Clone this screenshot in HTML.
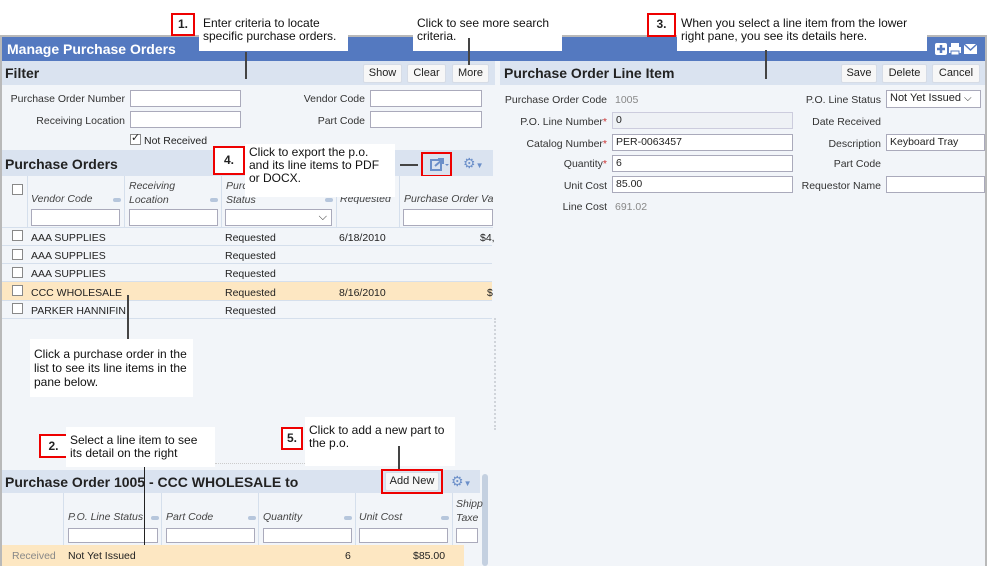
<!DOCTYPE html>
<html><head><meta charset="utf-8"><style>
*{box-sizing:border-box;margin:0;padding:0}
body{width:989px;height:566px;overflow:hidden;background:#fff;font-family:"Liberation Sans",sans-serif;font-size:10.5px;color:#222;position:relative}
.a{position:absolute}
.win{left:0;top:35px;width:987px;height:531px;background:#f2f5f9;border-left:2px solid #b9b9b9;border-top:2px solid #b9b9b9;border-right:2px solid #b9b9b9}
.title{left:2px;top:37px;width:983px;height:24px;background:#5479c0;color:#fff;font-weight:bold;font-size:14px;padding:4px 5px}
.hdr{background:#dae3f0;height:24px;font-weight:bold;font-size:14px;color:#222;padding:4px 3px}
.btn{background:#f7f7f7;border:1px solid #d6dce6;border-radius:2px;height:19px;font-size:11px;text-align:center;line-height:17px;color:#222}
.inp{background:#fff;border:1px solid #aab;height:17px;font-size:10.5px;padding:0 3px;line-height:15px}
.lbl{text-align:right;font-size:10.5px;color:#333}
.col{font-style:italic;color:#444;font-size:10.5px}
.row{left:2px;width:490px;height:18px;border-bottom:1px solid #d5dfec;font-size:10px;color:#222}
.cb{width:11px;height:11px;border:1px solid #888;background:#fff}
.sep{width:1px;background:#d5dfec}
.call{background:#fff;font-family:"Liberation Sans",sans-serif;font-size:12px;color:#111;line-height:13px;padding:2px 4px}
.num{border:2px solid #e00;background:#fff;font-family:"Liberation Sans",sans-serif;font-weight:bold;font-size:12px;text-align:center}
.ln{width:2px;background:#444}
.pill{width:8px;height:4px;border-radius:2px;background:#b6c6dc}
</style></head><body>
<div class="a win"></div>
<div class="a title">Manage Purchase Orders</div>
<div class="a" style="left:935px;top:42px;color:#fff;font-size:13px;font-weight:bold">
<svg width="44" height="14"><rect x="0" y="1" width="12" height="12" rx="2" fill="#fff"/><path d="M6 3v8M2 7h8" stroke="#5479c0" stroke-width="2.5"/><rect x="16" y="1" width="8" height="4" fill="#fff"/><rect x="14" y="5" width="12" height="6" fill="#fff"/><rect x="16" y="9" width="8" height="4" fill="#fff" stroke="#5479c0"/><rect x="29" y="2" width="13" height="10" fill="#fff"/><path d="M29 2l6.5 6 6.5-6" stroke="#5479c0" stroke-width="1.5" fill="none"/></svg></div>

<!-- Filter -->
<div class="a hdr" style="left:2px;top:61px;width:493px">Filter</div>
<div class="a btn" style="left:363px;top:64px;width:39px">Show</div>
<div class="a btn" style="left:407px;top:64px;width:39px">Clear</div>
<div class="a btn" style="left:452px;top:64px;width:37px">More</div>
<div class="a lbl" style="left:0;top:93px;width:125px">Purchase Order Number</div>
<div class="a inp" style="left:130px;top:90px;width:111px"></div>
<div class="a lbl" style="left:0;top:115px;width:125px">Receiving Location</div>
<div class="a inp" style="left:130px;top:111px;width:111px"></div>
<div class="a lbl" style="left:250px;top:93px;width:115px">Vendor Code</div>
<div class="a inp" style="left:370px;top:90px;width:112px"></div>
<div class="a lbl" style="left:250px;top:115px;width:115px">Part Code</div>
<div class="a inp" style="left:370px;top:111px;width:112px"></div>
<div class="a cb" style="left:130px;top:134px"></div><div class="a" style="left:131px;top:131px;font-size:11px">✓</div>
<div class="a" style="left:144px;top:135px">Not Received</div>

<!-- Purchase Orders -->
<div class="a hdr" style="left:2px;top:150px;width:491px;height:26px;padding-top:6px">Purchase Orders</div>
<div class="a" style="left:400px;top:164px;width:18px;height:2px;background:#444"></div>
<svg class="a" style="left:430px;top:156px" width="20" height="16"><rect x="1" y="4" width="10" height="10" fill="none" stroke="#6b8fc9" stroke-width="2"/><path d="M5 10l7-6M8 3h5v5" stroke="#6b8fc9" stroke-width="2" fill="none"/><path d="M15 8h4l-2 2z" fill="#6b8fc9"/></svg>
<div class="a" style="left:421px;top:152px;width:31px;height:25px;border:2px solid #e00"></div>
<div class="a" style="left:463px;top:155px;color:#6b8fc9;font-size:14px">⚙<span style="font-size:8px">▼</span></div>
<div class="a" style="left:2px;top:176px;width:491px;height:52px;background:#f2f5f9;border-bottom:1px solid #d5dfec"></div>
<div class="a cb" style="left:12px;top:184px"></div>
<div class="a sep" style="left:27px;top:176px;height:52px"></div>
<div class="a sep" style="left:124px;top:176px;height:52px"></div>
<div class="a sep" style="left:221px;top:176px;height:52px"></div>
<div class="a sep" style="left:336px;top:176px;height:52px"></div>
<div class="a sep" style="left:399px;top:176px;height:52px"></div>
<div class="a col" style="left:31px;top:193px">Vendor Code</div><div class="a pill" style="left:113px;top:198px"></div>
<div class="a col" style="left:129px;top:179px;line-height:14px">Receiving<br>Location</div><div class="a pill" style="left:210px;top:198px"></div>
<div class="a col" style="left:226px;top:179px;line-height:14px">Purc<br>Status</div><div class="a pill" style="left:325px;top:198px"></div>
<div class="a col" style="left:340px;top:193px">Requested</div>
<div class="a col" style="left:404px;top:193px;width:89px;overflow:hidden;white-space:nowrap">Purchase Order Value</div>
<div class="a inp" style="left:31px;top:209px;width:89px"></div>
<div class="a inp" style="left:129px;top:209px;width:89px"></div>
<div class="a inp" style="left:225px;top:209px;width:107px"><span style="position:absolute;right:4px;top:0;font-size:11px">⌵</span></div>
<div class="a inp" style="left:403px;top:209px;width:90px"></div>

<div class="a row" style="top:228px"></div><div class="a cb" style="left:12px;top:230px"></div><div class="a" style="left:31px;top:232px">AAA SUPPLIES</div><div class="a" style="left:225px;top:232px">Requested</div><div class="a" style="left:339px;top:232px">6/18/2010</div><div class="a" style="left:480px;top:232px">$4,</div>
<div class="a row" style="top:246px"></div><div class="a cb" style="left:12px;top:249px"></div><div class="a" style="left:31px;top:250px">AAA SUPPLIES</div><div class="a" style="left:225px;top:250px">Requested</div>
<div class="a row" style="top:264px"></div><div class="a cb" style="left:12px;top:267px"></div><div class="a" style="left:31px;top:268px">AAA SUPPLIES</div><div class="a" style="left:225px;top:268px">Requested</div>
<div class="a row" style="top:282px;height:19px;background:#fde7c2"></div><div class="a cb" style="left:12px;top:285px"></div><div class="a" style="left:31px;top:287px">CCC WHOLESALE</div><div class="a" style="left:225px;top:287px">Requested</div><div class="a" style="left:339px;top:287px">8/16/2010</div><div class="a" style="left:487px;top:287px">$</div>
<div class="a row" style="top:301px"></div><div class="a cb" style="left:12px;top:303px"></div><div class="a" style="left:31px;top:305px">PARKER HANNIFIN</div><div class="a" style="left:225px;top:305px">Requested</div>
<div class="a" style="left:494px;top:318px;height:112px;border-left:2px dotted #d0d4da"></div>

<!-- bottom pane -->
<div class="a" style="left:215px;top:463px;width:110px;border-top:1px dotted #ccc"></div>
<div class="a hdr" style="left:2px;top:470px;width:478px;height:23px;padding-top:4px">Purchase Order 1005 - CCC WHOLESALE to</div>
<div class="a btn" style="left:385px;top:472px;width:54px">Add New</div>
<div class="a" style="left:381px;top:469px;width:62px;height:25px;border:2px solid #e00"></div>
<div class="a" style="left:451px;top:473px;color:#6b8fc9;font-size:14px">⚙<span style="font-size:8px">▼</span></div>
<div class="a" style="left:482px;top:474px;width:6px;height:92px;background:#c4d0e0;border-radius:3px"></div>
<div class="a sep" style="left:63px;top:493px;height:52px"></div>
<div class="a sep" style="left:161px;top:493px;height:52px"></div>
<div class="a sep" style="left:258px;top:493px;height:52px"></div>
<div class="a sep" style="left:355px;top:493px;height:52px"></div>
<div class="a sep" style="left:452px;top:493px;height:52px"></div>
<div class="a col" style="left:68px;top:511px">P.O. Line Status</div><div class="a pill" style="left:151px;top:516px"></div>
<div class="a col" style="left:166px;top:511px">Part Code</div><div class="a pill" style="left:248px;top:516px"></div>
<div class="a col" style="left:263px;top:511px">Quantity</div><div class="a pill" style="left:344px;top:516px"></div>
<div class="a col" style="left:359px;top:511px">Unit Cost</div><div class="a pill" style="left:441px;top:516px"></div>
<div class="a col" style="left:456px;top:497px;line-height:14px">Shipp<br>Taxe</div>
<div class="a inp" style="left:68px;top:528px;width:90px;height:15px"></div>
<div class="a inp" style="left:166px;top:528px;width:89px;height:15px"></div>
<div class="a inp" style="left:263px;top:528px;width:89px;height:15px"></div>
<div class="a inp" style="left:359px;top:528px;width:89px;height:15px"></div>
<div class="a inp" style="left:456px;top:528px;width:22px;height:15px"></div>
<div class="a" style="left:2px;top:545px;width:462px;height:21px;background:#fde7c2"></div>
<div class="a" style="left:12px;top:550px;color:#888">Received</div>
<div class="a" style="left:68px;top:550px">Not Yet Issued</div>
<div class="a" style="left:345px;top:550px">6</div>
<div class="a" style="left:413px;top:550px">$85.00</div>

<!-- right pane -->
<div class="a hdr" style="left:500px;top:61px;width:485px;padding-left:4px">Purchase Order Line Item</div>
<div class="a btn" style="left:841px;top:64px;width:36px">Save</div>
<div class="a btn" style="left:882px;top:64px;width:45px">Delete</div>
<div class="a btn" style="left:932px;top:64px;width:48px">Cancel</div>
<div class="a lbl" style="left:500px;top:94px;width:107px">Purchase Order Code</div><div class="a" style="left:615px;top:94px;color:#888">1005</div>
<div class="a lbl" style="left:500px;top:116px;width:107px">P.O. Line Number<span style="color:#c33">*</span></div><div class="a inp" style="left:612px;top:112px;width:181px;background:#eef1f5;border-color:#ccd">0</div>
<div class="a lbl" style="left:500px;top:138px;width:107px">Catalog Number<span style="color:#c33">*</span></div><div class="a inp" style="left:612px;top:134px;width:181px">PER-0063457</div>
<div class="a lbl" style="left:500px;top:158px;width:107px">Quantity<span style="color:#c33">*</span></div><div class="a inp" style="left:612px;top:155px;width:181px">6</div>
<div class="a lbl" style="left:500px;top:180px;width:107px">Unit Cost</div><div class="a inp" style="left:612px;top:176px;width:181px">85.00</div>
<div class="a lbl" style="left:500px;top:201px;width:107px">Line Cost</div><div class="a" style="left:615px;top:201px;color:#888">691.02</div>
<div class="a lbl" style="left:780px;top:94px;width:101px">P.O. Line Status</div><div class="a inp" style="left:886px;top:90px;width:95px;height:18px;font-size:11px">Not Yet Issued <span style="font-size:10px">⌵</span></div>
<div class="a lbl" style="left:780px;top:116px;width:101px">Date Received</div>
<div class="a lbl" style="left:780px;top:138px;width:101px">Description</div><div class="a inp" style="left:886px;top:134px;width:99px">Keyboard Tray</div>
<div class="a lbl" style="left:780px;top:158px;width:101px">Part Code</div>
<div class="a lbl" style="left:780px;top:180px;width:101px">Requestor Name</div><div class="a inp" style="left:886px;top:176px;width:99px"></div>

<!-- callouts -->
<div class="a num" style="left:171px;top:13px;width:24px;height:23px;line-height:18px">1.</div>
<div class="a call" style="left:199px;top:15px;width:149px;height:36px">Enter criteria to locate specific purchase orders.</div>
<div class="a ln" style="left:245px;top:52px;height:27px"></div>
<div class="a call" style="left:413px;top:15px;width:149px;height:36px">Click to see more search criteria.</div>
<div class="a ln" style="left:468px;top:38px;height:27px"></div>
<div class="a num" style="left:647px;top:13px;width:29px;height:24px;line-height:18px">3.</div>
<div class="a call" style="left:677px;top:15px;width:250px;height:36px">When you select a line item from the lower right pane, you see its details here.</div>
<div class="a ln" style="left:765px;top:50px;height:29px"></div>
<div class="a num" style="left:213px;top:146px;width:32px;height:29px;line-height:25px">4.</div>
<div class="a call" style="left:245px;top:144px;width:150px;height:53px">Click to export the p.o. and its line items to PDF or DOCX.</div>
<div class="a ln" style="left:127px;top:295px;height:52px"></div>
<div class="a call" style="left:30px;top:339px;width:163px;height:58px;padding-top:8px;line-height:14px">Click a purchase order in the list to see its line items in the pane below.</div>
<div class="a num" style="left:39px;top:434px;width:29px;height:24px;line-height:20px">2.</div>
<div class="a call" style="left:66px;top:427px;width:149px;height:40px;padding-top:7px">Select a line item to see its detail on the right</div>
<div class="a ln" style="left:144px;top:467px;height:78px;width:1px;background:#222"></div>
<div class="a num" style="left:281px;top:427px;width:22px;height:23px;line-height:19px">5.</div>
<div class="a call" style="left:305px;top:417px;width:150px;height:49px;padding-top:7px">Click to add a new part to the p.o.</div>
<div class="a ln" style="left:398px;top:446px;height:23px"></div>
</body></html>
